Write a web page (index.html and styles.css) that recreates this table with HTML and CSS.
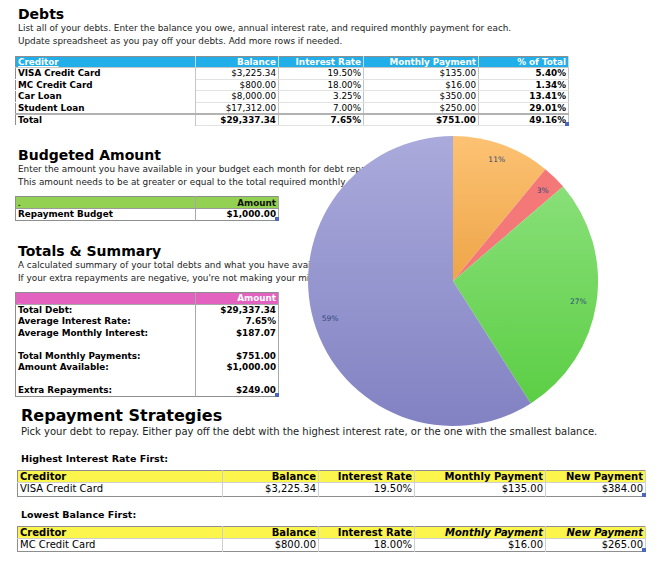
FILE: index.html
```html
<!DOCTYPE html>
<html>
<head>
<meta charset="utf-8">
<title>Debt Repayment</title>
<link rel="stylesheet" href="styles.css">
</head>
<body>
<div class="page">
  <section class="sec sec-debts">
    <h1 class="title">Debts</h1>
    <p class="desc">List all of your debts. Enter the balance you owe, annual interest rate, and required monthly payment for each.<br>Update spreadsheet as you pay off your debts. Add more rows if needed.</p>
    <div class="tblwrap w-debts">
      <table class="sheet debts">
        <colgroup><col class="d1"><col class="d2"><col class="d3"><col class="d4"><col class="d5"></colgroup>
        <thead>
          <tr><th class="l"><u>Creditor</u></th><th>Balance</th><th>Interest Rate</th><th>Monthly Payment</th><th>% of Total</th></tr>
        </thead>
        <tbody>
          <tr><td class="l b">VISA Credit Card</td><td>$3,225.34</td><td>19.50%</td><td>$135.00</td><td class="b">5.40%</td></tr>
          <tr><td class="l b">MC Credit Card</td><td>$800.00</td><td>18.00%</td><td>$16.00</td><td class="b">1.34%</td></tr>
          <tr><td class="l b">Car Loan</td><td>$8,000.00</td><td>3.25%</td><td>$350.00</td><td class="b">13.41%</td></tr>
          <tr><td class="l b">Student Loan</td><td>$17,312.00</td><td>7.00%</td><td>$250.00</td><td class="b">29.01%</td></tr>
          <tr class="total"><td class="l">Total</td><td>$29,337.34</td><td>7.65%</td><td>$751.00</td><td>49.16%</td></tr>
        </tbody>
      </table>
      <span class="handle"></span>
    </div>
  </section>

  <section class="sec sec-budget">
    <h1 class="title">Budgeted Amount</h1>
    <p class="desc">Enter the amount you have available in your budget each month for debt repayments.<br>This amount needs to be at greater or equal to the total required monthly payments.</p>
    <div class="tblwrap w-small">
      <table class="sheet small green">
        <colgroup><col class="d1"><col class="d2"></colgroup>
        <thead><tr><th class="l"><span class="mark">-</span></th><th>Amount</th></tr></thead>
        <tbody><tr><td class="l">Repayment Budget</td><td>$1,000.00</td></tr></tbody>
      </table>
      <span class="handle"></span>
    </div>
  </section>

  <section class="sec sec-totals">
    <h1 class="title">Totals &amp; Summary</h1>
    <p class="desc">A calculated summary of your total debts and what you have available.<br>If your extra repayments are negative, you're not making your minimum payments.</p>
    <div class="tblwrap w-small">
      <table class="sheet small pink">
        <colgroup><col class="d1"><col class="d2"></colgroup>
        <thead><tr><th class="l"><span class="mark">_</span></th><th>Amount</th></tr></thead>
        <tbody>
          <tr><td class="l">Total Debt:</td><td>$29,337.34</td></tr>
          <tr><td class="l">Average Interest Rate:</td><td>7.65%</td></tr>
          <tr><td class="l">Average Monthly Interest:</td><td>$187.07</td></tr>
          <tr><td class="l">&nbsp;</td><td>&nbsp;</td></tr>
          <tr><td class="l">Total Monthly Payments:</td><td>$751.00</td></tr>
          <tr><td class="l">Amount Available:</td><td>$1,000.00</td></tr>
          <tr><td class="l">&nbsp;</td><td>&nbsp;</td></tr>
          <tr><td class="l">Extra Repayments:</td><td>$249.00</td></tr>
        </tbody>
      </table>
      <span class="handle"></span>
    </div>
  </section>

  <section class="sec sec-strat">
    <h1 class="title big">Repayment Strategies</h1>
    <p class="desc desc-big">Pick your debt to repay. Either pay off the debt with the highest interest rate, or the one with the smallest balance.</p>

    <h2 class="sub">Highest Interest Rate First:</h2>
    <div class="tblwrap w-strat">
      <table class="sheet strat">
        <colgroup><col class="s1"><col class="s2"><col class="s3"><col class="s4"><col class="s5"></colgroup>
        <thead><tr><th class="l">Creditor</th><th>Balance</th><th>Interest Rate</th><th>Monthly Payment</th><th>New Payment</th></tr></thead>
        <tbody><tr><td class="l">VISA Credit Card</td><td>$3,225.34</td><td>19.50%</td><td>$135.00</td><td>$384.00</td></tr></tbody>
      </table>
      <span class="handle"></span>
    </div>

    <h2 class="sub sub2">Lowest Balance First:</h2>
    <div class="tblwrap w-strat">
      <table class="sheet strat">
        <colgroup><col class="s1"><col class="s2"><col class="s3"><col class="s4"><col class="s5"></colgroup>
        <thead><tr><th class="l">Creditor</th><th>Balance</th><th>Interest Rate</th><th class="it">Monthly Payment</th><th class="it">New Payment</th></tr></thead>
        <tbody><tr><td class="l">MC Credit Card</td><td>$800.00</td><td>18.00%</td><td>$16.00</td><td>$265.00</td></tr></tbody>
      </table>
      <span class="handle"></span>
    </div>
  </section>

  <svg class="pie" width="290" height="290" viewBox="0 0 290 290">
    <defs>
      <linearGradient id="gO" gradientUnits="userSpaceOnUse" x1="0" y1="0" x2="0" y2="145">
        <stop offset="0" stop-color="#fcc273"/><stop offset="1" stop-color="#eea548"/>
      </linearGradient>
      <linearGradient id="gG" gradientUnits="userSpaceOnUse" x1="0" y1="45" x2="0" y2="270">
        <stop offset="0" stop-color="#8ae07a"/><stop offset="1" stop-color="#5bce44"/>
      </linearGradient>
      <linearGradient id="gP" gradientUnits="userSpaceOnUse" x1="0" y1="0" x2="0" y2="290">
        <stop offset="0" stop-color="#aaaadc"/><stop offset="1" stop-color="#8282c3"/>
      </linearGradient>
    </defs>
    <path d="M145 145 L145 0 A145 145 0 0 1 237.4 33.2 Z" fill="url(#gO)"/>
    <path d="M145 145 L237.4 33.2 A145 145 0 0 1 255.1 50.6 Z" fill="#f47878"/>
    <path d="M145 145 L255.1 50.6 A145 145 0 0 1 222.8 267.4 Z" fill="url(#gG)"/>
    <path d="M145 145 L222.8 267.4 A145 145 0 1 1 145 0 Z" fill="url(#gP)"/>
    <g class="lbl">
      <text x="188.7" y="25.5">11%</text>
      <text x="234.7" y="56.8">3%</text>
      <text x="270.3" y="167.5">27%</text>
      <text x="22" y="184.8">59%</text>
    </g>
  </svg>
</div>
</body>
</html>
```
FILE: styles.css
```css
* { box-sizing: border-box; margin: 0; padding: 0; }
html, body { background: #fff; }
body {
  font-family: "DejaVu Sans", Verdana, sans-serif;
  color: #000;
  width: 662px;
  height: 570px;
  overflow: hidden;
}
.page { position: relative; padding-top: 6px; }

.sec { padding-left: 15px; }
.title {
  font-size: 14px;
  line-height: 16px;
  font-weight: bold;
  padding-left: 3px;
}
.desc {
  font-size: 8.85px;
  line-height: 12.5px;
  color: #1c1c1c;
  padding-left: 3px;
  margin-bottom: 9px;
}

.sec-budget { margin-top: 21px; }
.sec-budget .desc { margin-bottom: 8px; }
.sec-totals { margin-top: 22px; }
.sec-totals .desc { margin-bottom: 8px; }

.sec-strat { margin-top: 10px; padding-left: 17px; }
.title.big { font-size: 16px; line-height: 18px; padding-left: 4px; }
.desc.desc-big { font-size: 10px; line-height: 12px; padding-left: 4px; margin-top: 1px; margin-bottom: 0; }
.sub {
  font-size: 9.5px;
  line-height: 12px;
  font-weight: bold;
  padding-left: 4px;
  margin-top: 15px;
  margin-bottom: 5px;
}
.sub2 { margin-top: 12px; }

/* tables */
.tblwrap { position: relative; }
.w-debts { width: 553px; }
.w-small { width: 263px; }
.w-strat { width: 628px; }
.handle {
  position: absolute;
  right: -1px;
  bottom: 0px;
  width: 4px;
  height: 4px;
  background: #4a66c0;
}

.sheet {
  border-collapse: collapse;
  table-layout: fixed;
  width: 100%;
  border: 1px solid #8e8e8e;
}
.sheet th, .sheet td {
  padding: 0 2px;
  text-align: right;
  white-space: nowrap;
  overflow: hidden;
}
.sheet .l { text-align: left; }

col.d1 { width: 180px; }
col.d2 { width: 83px; }
col.d3 { width: 85px; }
col.d4 { width: 115px; }
col.d5 { width: 90px; }

.debts, .small { font-size: 8.8px; }
.debts th {
  background: #22afe9;
  color: #fff;
  font-weight: bold;
  line-height: 10px;
  border-right: 1px solid #b9e2f5;
  border-bottom: 1px solid #c7c7c7;
}
.debts td {
  line-height: 10.5px;
  border-right: 1px solid #c6c6c6;
  border-bottom: 1px solid #e2e2e2;
}
.debts td.l { border-bottom-color: transparent; }
.debts .b { font-weight: bold; }
.debts tr.total td {
  font-weight: bold;
  border-top: 2px solid #b2b2b2;
  line-height: 10px;
}

.small th {
  font-weight: bold;
  line-height: 10px;
  border-right: 1px solid #a8a8a8;
}
.small td {
  font-weight: bold;
  line-height: 11.4px;
  border-right: 1px solid #a8a8a8;
}
.green th { background: #93d152; color: #111; border-bottom: 1px solid #9a9a9a; }
.green td { line-height: 11px; }
.pink th { background: #e362bf; color: #fff; border-bottom: 1px solid #a8a8a8; line-height: 10.5px; }
.mark { font-size: 6px; line-height: 6px; vertical-align: -2px; }

col.s1 { width: 205px; }
col.s2 { width: 96px; }
col.s3 { width: 96px; }
col.s4 { width: 131px; }
col.s5 { width: 100px; }

.strat { font-size: 10px; }
.strat th {
  background: #fbf54c;
  font-weight: bold;
  line-height: 11px;
  border-right: 1px solid #cfcfcf;
  border-bottom: 1px solid #cfcfcf;
}
.strat th.it { font-style: italic; }
.strat td {
  line-height: 12.5px;
  border-right: 1px solid #d0d0d0;
}

/* chart overlay */
.pie {
  position: absolute;
  left: 308px;
  top: 136px;
}
.lbl text {
  font-family: "DejaVu Sans", Verdana, sans-serif;
  font-size: 7.5px;
  fill: #2d4a7c;
  text-anchor: middle;
}
```
